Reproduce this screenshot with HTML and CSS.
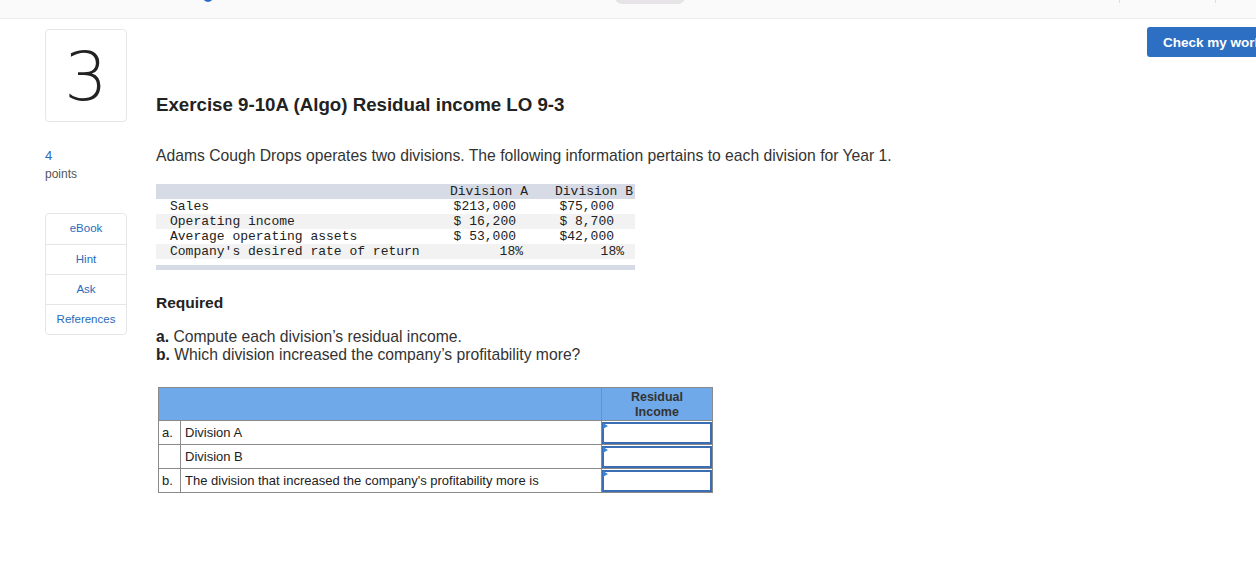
FILE: index.html
```html
<!DOCTYPE html>
<html>
<head>
<meta charset="utf-8">
<link rel="stylesheet" href="styles.css">
</head>
<body>
<div class="topbar">
  <span class="dot"></span>
  <span class="pill"></span>
  <span class="tick t1"></span>
  <span class="tick t2"></span>
</div>
<div class="page">
  <div class="head">
    <div class="qnum">3</div>
    <h1 class="title">Exercise 9-10A (Algo) Residual income LO 9-3</h1>
    <button class="check">Check my work</button>
  </div>
  <div class="body">
    <aside class="side">
      <div class="pts">4</div>
      <div class="ptslabel">points</div>
      <ul class="menu">
        <li>eBook</li>
        <li>Hint</li>
        <li>Ask</li>
        <li>References</li>
      </ul>
    </aside>
    <main class="content">
      <p class="intro">Adams Cough Drops operates two divisions. The following information pertains to each division for Year 1.</p>
      <div class="data">
        <div class="drow dhead"><span class="lbl"></span><span class="va hd">Division A</span><span class="vb hd">Division B</span></div>
        <div class="drow"><span class="lbl">Sales</span><span class="va">$213,000</span><span class="vb">$75,000</span></div>
        <div class="drow alt"><span class="lbl">Operating income</span><span class="va">$ 16,200</span><span class="vb">$ 8,700</span></div>
        <div class="drow"><span class="lbl">Average operating assets</span><span class="va">$ 53,000</span><span class="vb">$42,000</span></div>
        <div class="drow alt"><span class="lbl">Company's desired rate of return</span><span class="va pct">18%</span><span class="vb pct">18%</span></div>
        <div class="dfoot"></div>
      </div>
      <h2 class="req">Required</h2>
      <p class="task"><b>a.</b> Compute each division’s residual income.<br><b>b.</b> Which division increased the company’s profitability more?</p>
      <table class="ans">
        <tr class="ahead"><th colspan="2"></th><th class="rc">Residual<br>Income</th></tr>
        <tr><td class="c1">a.</td><td class="c2">Division A</td><td class="inp"><div class="box"><span class="tri"></span></div></td></tr>
        <tr><td class="c1"></td><td class="c2">Division B</td><td class="inp"><div class="box"><span class="tri"></span></div></td></tr>
        <tr><td class="c1">b.</td><td class="c2">The division that increased the company's profitability more is</td><td class="inp"><div class="box"><span class="tri"></span></div></td></tr>
      </table>
    </main>
  </div>
</div>
</body>
</html>
```
FILE: styles.css
```css
* { box-sizing: border-box; }
html, body { margin: 0; padding: 0; }
body {
  width: 1256px;
  height: 561px;
  overflow: hidden;
  background: #fff;
  font-family: "Liberation Sans", Arial, sans-serif;
  color: #333;
}
.topbar {
  position: relative;
  height: 19px;
  background: #fafafa;
  border-bottom: 1px solid #ececec;
}
.dot {
  position: absolute;
  left: 203px;
  top: -8px;
  width: 10px;
  height: 10px;
  border-radius: 50%;
  background: #2a6bc5;
}
.pill {
  position: absolute;
  left: 615px;
  top: -10px;
  width: 70px;
  height: 14px;
  border-radius: 7px;
  background: #e6e4e7;
}
.tick {
  position: absolute;
  top: 0;
  width: 1px;
  height: 3px;
  background: #ddd;
}
.t1 { left: 1119px; }
.t2 { left: 1215px; }

.page { padding-left: 45px; }
.head {
  display: flex;
  align-items: flex-start;
  margin-top: 10px;
}
.qnum {
  width: 82px;
  height: 93px;
  border: 1px solid #e6e6e6;
  border-radius: 4px;
  font-family: "DejaVu Sans", sans-serif;
  font-weight: 200;
  font-size: 68px;
  line-height: 93px;
  text-align: center;
  color: #222;
}
.title {
  flex: 1;
  margin: 64px 0 0 29px;
  font-size: 18.7px;
  line-height: 24px;
  font-weight: bold;
  color: #222;
}
.check {
  flex-shrink: 0;
  margin: -2px -24px 0 0;
  width: 133px;
  height: 30px;
  padding: 0 0 0 16px;
  text-align: left;
  white-space: nowrap;
  border: none;
  border-radius: 3px;
  background: #2d6fc2;
  color: #fff;
  font-family: "Liberation Sans", Arial, sans-serif;
  font-weight: bold;
  font-size: 13.5px;
}
.body { display: flex; }
.side { width: 82px; flex-shrink: 0; padding-top: 26px; }
.pts { color: #2a6bbb; font-size: 13px; line-height: 16px; }
.ptslabel { color: #555; font-size: 12px; line-height: 16px; margin-top: 2px; }
.menu {
  list-style: none;
  margin: 31px 0 0 0;
  padding: 0;
  border: 1px solid #e6e6e6;
  border-radius: 4px;
}
.menu li {
  height: 30px;
  line-height: 29px;
  text-align: center;
  font-size: 11.5px;
  color: #2a6bbb;
  border-top: 1px solid #e6e6e6;
}
.menu li:first-child { border-top: none; }
.content { margin-left: 29px; padding-top: 24px; }
.intro { margin: 0; font-size: 15.7px; line-height: 20px; color: #333; }
.data {
  margin-top: 18px;
  width: 479px;
  font-family: "Liberation Mono", "Courier New", monospace;
  font-size: 13px;
  color: #222;
}
.drow { display: flex; height: 15px; line-height: 15px; }
.dhead { background: #d7dbe5; }
.alt { background: #f2f2f2; }
.lbl { width: 280px; padding-left: 14px; }
.va { width: 92px; text-align: right; padding-right: 12px; }
.vb { width: 107px; text-align: right; padding-right: 21px; }
.va.hd { padding-right: 0; }
.vb.hd { padding-right: 2px; }
.va.pct { padding-right: 5px; }
.vb.pct { padding-right: 11px; }
.dfoot { margin-top: 6px; height: 5px; background: #d7dbe5; }
.req { margin: 23px 0 0 0; font-size: 15.5px; line-height: 20px; font-weight: bold; color: #222; }
.task { margin: 15px 0 0 0; font-size: 15.7px; line-height: 18px; color: #333; }
.task b { color: #222; }
.ans {
  margin: 23px 0 0 2px;
  border-collapse: collapse;
  font-size: 13px;
  color: #222;
}
.ans td, .ans th { border: 1px solid #8a8a8a; padding: 0; }
.ahead th { background: #70a9e9; height: 33px; }
.ahead .rc { width: 111px; font-size: 12.5px; font-weight: bold; line-height: 15px; color: #333; text-align: center; vertical-align: top; padding-top: 2px; }
.c1 { width: 22px; height: 24px; padding-left: 3px !important; }
.c2 { width: 421px; padding-left: 4px !important; }
.inp { padding: 0; }
.box {
  position: relative;
  height: 22px;
  border: 2px solid #3b6db5;
}
.tri {
  position: absolute;
  left: -1px;
  top: -1px;
  width: 0;
  height: 0;
  border-top: 3px solid transparent;
  border-bottom: 3px solid transparent;
  border-left: 5px solid #3a86d8;
}
```
